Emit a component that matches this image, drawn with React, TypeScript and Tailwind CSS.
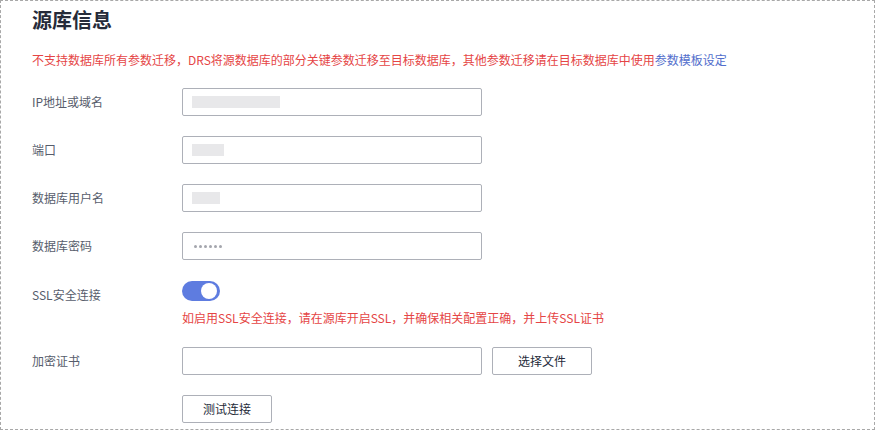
import React, { useState } from 'react';

const font = { fontFamily: '"Noto Sans CJK SC", "Noto Sans", sans-serif' };

interface RowProps {
  label: string;
  children: React.ReactNode;
}

const FormRow: React.FC<RowProps> = ({ label, children }) => (
  <div className="flex items-start">
    <div className="w-[150px] h-7 flex items-center text-xs text-[#575d6c]">{label}</div>
    <div className="flex flex-col">{children}</div>
  </div>
);

const MaskedInput: React.FC<{ maskWidth?: number; password?: boolean }> = ({ maskWidth, password }) => (
  <div className="w-[300px] h-7 border border-[#adb0b8] rounded-[2px] bg-white flex items-center px-[9px]">
    {password ? (
      <div className="flex gap-[2px] pl-[2px]">
        {[0, 1, 2, 3, 4, 5].map((i) => (
          <span key={i} className="w-[3px] h-[3px] rounded-full bg-[#a4a6ad]" />
        ))}
      </div>
    ) : maskWidth ? (
      <div className="h-3 bg-[#e8e8ea]" style={{ width: maskWidth }} />
    ) : null}
  </div>
);

export default function App() {
  const [sslOn, setSslOn] = useState(true);

  return (
    <div style={font} className="w-[875px] h-[430px] bg-white border border-dashed border-[#a8a8a8] pl-[31px] pt-[5px]">
      {/* Title */}
      <h2 className="text-[20px] leading-7 font-bold text-[#252b3a]">源库信息</h2>

      {/* Notice */}
      <p className="mt-[17px] text-xs leading-[18px] text-[#e54545]">
        不支持数据库所有参数迁移，DRS将源数据库的部分关键参数迁移至目标数据库，其他参数迁移请在目标数据库中使用
        <span className="text-[#526ecc]">参数模板设定</span>
      </p>

      {/* Form */}
      <div className="mt-[19px] flex flex-col gap-5">
        <FormRow label="IP地址或域名">
          <MaskedInput maskWidth={88} />
        </FormRow>
        <FormRow label="端口">
          <MaskedInput maskWidth={32} />
        </FormRow>
        <FormRow label="数据库用户名">
          <MaskedInput maskWidth={28} />
        </FormRow>
        <FormRow label="数据库密码">
          <MaskedInput password />
        </FormRow>
        <div className="flex items-start mt-px">
          <div className="w-[150px] h-7 flex items-center text-xs text-[#575d6c]">SSL安全连接</div>
          <div className="flex flex-col">
            <button
              type="button"
              onClick={() => setSslOn(!sslOn)}
              className={`w-[38px] h-5 rounded-full flex items-center px-[3px] ${sslOn ? 'bg-[#5e7ce0] justify-end' : 'bg-[#adb0b8] justify-start'}`}
            >
              <span className="w-[16px] h-[16px] rounded-full bg-white" />
            </button>
            <p className="mt-[8px] text-xs leading-[18px] text-[#e54545]">
              如启用SSL安全连接，请在源库开启SSL，并确保相关配置正确，并上传SSL证书
            </p>
          </div>
        </div>
        <FormRow label="加密证书">
          <div className="flex gap-[10px]">
            <MaskedInput />
            <button
              type="button"
              className="w-[100px] h-7 border border-[#adb0b8] rounded-[2px] bg-white text-xs text-[#252b3a]"
            >
              选择文件
            </button>
          </div>
        </FormRow>
        <div className="pl-[150px]">
          <button
            type="button"
            className="w-[90px] h-7 border border-[#adb0b8] rounded-[2px] bg-white text-xs text-[#252b3a]"
          >
            测试连接
          </button>
        </div>
      </div>
    </div>
  );
}
